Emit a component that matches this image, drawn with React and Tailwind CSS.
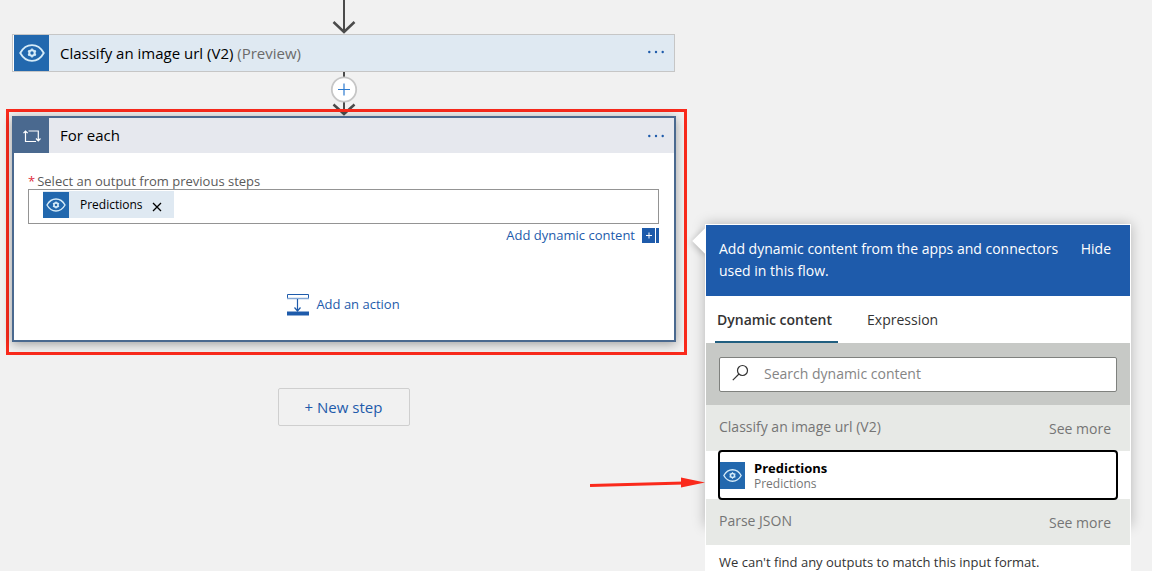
import React, { useState } from 'react';

const EyeIcon = ({ className }) => (
  <svg viewBox="0 0 26 26" className={className} fill="none" stroke="#d5ebf8" aria-hidden="true">
    <path d="M4 13C6.200 9 9.300 7 13 7s6.800 2 9 6c-2.200 4-5.300 6-9 6s-6.800-2-9-6z" strokeWidth="1.400" />
    <circle cx="13" cy="13" r="2.100" strokeWidth="1.600" />
    <path d="M13 9.500v1.200M13 15.300v1.200M10 11.300l1 .6M15 14.100l1 .6M10 14.700l1-.6M15 11.900l1-.6" strokeWidth="1.200" />
  </svg>
);

const LoopIcon = () => (
  <svg viewBox="0 0 18 14" className="w-[18px] h-[14px]" fill="none" stroke="#fff" strokeWidth="1.200" aria-hidden="true">
    <path d="M2.500 2v10.500H13M.5 4.200L2.500 2l2.200 2.200M5.500 2h9.800v10M13 9.500l2.300 2.300 2.200-2.300" />
  </svg>
);

const InsertIcon = () => (
  <svg viewBox="0 0 22 22" className="w-[22px] h-[22px]" fill="none" stroke="#1e5bab" aria-hidden="true">
    <path d="M.5 4.500v-4h21v4" />
    <path d="M0 4.500h22" stroke="#84a8d6" strokeWidth="1.500" />
    <path d="M10.500 5v12M7.500 13.500l3 3.500 3-3.500" strokeWidth="1.200" />
    <path d="M0 19.500h22" strokeWidth="4" />
  </svg>
);

const MoreButton = () => (
  <button type="button" aria-label="More options" className="p-1">
    <svg viewBox="0 0 16 4" className="w-4 h-1" fill="#1e5bab" aria-hidden="true">
      <circle cx="1.300" cy="2" r="1.200" />
      <circle cx="8" cy="2" r="1.200" />
      <circle cx="14.700" cy="2" r="1.200" />
    </svg>
  </button>
);

const SectionHeader = ({ title }) => (
  <div className="flex justify-between h-[46px] px-[13px] bg-[#e7e9e6] text-sm leading-5 text-[#757575]">
    <h3 className="pt-3">{title}</h3>
    <button type="button" className="self-end pb-3 mr-1.5">See more</button>
  </div>
);

const ForEachCard = () => (
  <section className="bg-white border-2 border-[#4a698f] shadow-[0_2px_10px_rgba(0,0,0,0.35)]">
    <header className="flex items-center h-[35px] bg-[#e6e8ee]">
      <span className="flex items-center justify-center w-[35px] h-full bg-[#4a698f]">
        <LoopIcon />
      </span>
      <h2 className="flex-1 pl-[11px] text-[15px]">For each</h2>
      <div className="flex pr-1.5"><MoreButton /></div>
    </header>
    <div className="pt-5 pl-[14px] pr-[15px] pb-6">
      <label htmlFor="output" className="flex gap-0.5 text-[13px] leading-4 text-[#5a5a5a]">
        <span className="text-[#e02b3c]">*</span>
        Select an output from previous steps
      </label>
      <div className="flex h-[35px] pl-[14px] pt-px border border-[#949494]">
        <span className="flex items-center h-[27px] bg-[#dfe9f2] text-xs">
          <EyeIcon className="w-[26px] h-[26px] bg-[#2268ae]" />
          <span className="pl-[11px]">Predictions</span>
          <button type="button" aria-label="Remove Predictions" className="pl-[9px] pr-3 pt-1">
            <svg viewBox="0 0 10 10" className="w-[10px] h-[10px]" stroke="#000" strokeWidth="1.300" aria-hidden="true">
              <path d="M1 1l8 8M9 1L1 9" />
            </svg>
          </button>
        </span>
        <input id="output" type="text" className="flex-1 min-w-0 outline-none" />
      </div>
      <div className="flex justify-end">
        <button type="button" className="flex items-center gap-[7px] pt-0.5 text-[13px] leading-[18px] text-[#1e5bab]">
          Add dynamic content
          <svg viewBox="0 0 17 15" className="w-[17px] h-[15px]" aria-hidden="true">
            <path d="M0 0h17v15H0z" fill="#1e5bab" />
            <path d="M13.500 0v15" stroke="#fff" />
            <path d="M4 7.500h6M7 4.500v6" stroke="#fff" />
          </svg>
        </button>
      </div>
      <div className="flex justify-center pt-[50px]">
        <button type="button" className="flex items-center gap-[7px] text-[13px] text-[#1e5bab]">
          <InsertIcon />
          Add an action
        </button>
      </div>
    </div>
  </section>
);

const Flow = () => (
  <main className="flex-1 min-w-0 flex flex-col">
    <svg viewBox="0 0 24 34" className="self-center w-6 h-[34px] ml-[-5px]" fill="none" stroke="#4b4b4b" aria-hidden="true">
      <path d="M12 0v32" strokeWidth="2" />
      <path d="M1.500 22L12 32 22.500 22" strokeWidth="2.500" />
    </svg>
    <section className="flex items-center h-[38px] ml-1.5 mr-3 bg-[#dfe9f2] border border-[#c6c6c6]">
      <span className="flex items-center justify-center w-9 h-full border-l border-white bg-[#2268ae]">
        <EyeIcon className="w-[34px] h-[34px]" />
      </span>
      <h2 className="flex-1 pl-[11px] text-[15px]">
        Classify an image url (V2) <span className="text-[#6b6b6b]">(Preview)</span>
      </h2>
      <div className="flex pr-1.5 pb-0.5"><MoreButton /></div>
    </section>
    <button type="button" aria-label="Insert a new step" className="self-center ml-[-5px] h-[37px]">
      <svg viewBox="0 0 26 37" className="w-[26px] h-[37px] overflow-visible" fill="none" stroke="#4b4b4b">
        <path d="M13 0v42" strokeWidth="2" />
        <path d="M2.500 32.500L13 42l10.500-9.500" strokeWidth="2.500" />
        <circle cx="13" cy="17.500" r="12.200" fill="#fff" stroke="#c6c6c6" strokeWidth="1.800" />
        <path d="M7 17.500h12M13 11.500v12" stroke="#2d7bd0" strokeWidth="1.200" />
      </svg>
    </button>
    <div className="relative border-[3px] border-[#fa2a1c] pt-1 pl-[3px] pr-2 pb-2.5">
      <ForEachCard />
    </div>
    <button type="button" className="self-center w-[132px] h-[38px] mt-[33px] ml-[-6px] border border-[#cfcfcf] rounded-xs text-[15px] text-[#1e5bab]">
      + New step
    </button>
  </main>
);

const DynamicContentPanel = () => {
  const [search, setSearch] = useState('');

  return (
    <aside className="relative w-[426px] mt-56">
      <div className="absolute inset-x-0 top-0 h-[302px] shadow-[0_0_12px_rgba(0,0,0,0.25)]" />
      <div className="absolute top-2 left-0 w-[18px] h-[18px] -translate-x-1/2 rotate-45 bg-white shadow-[0_2px_6px_rgba(0,0,0,0.2)]" />
      <div className="relative bg-white border border-white">
        <header className="flex justify-between h-[71px] px-[13px] pt-[13px] bg-[#1e5bab] text-white text-sm leading-[22px]">
          <p className="w-[345px]">Add dynamic content from the apps and connectors used in this flow.</p>
          <button type="button" className="self-start mr-1.5">Hide</button>
        </header>
        <div role="tablist" className="flex gap-[27px] h-[47px] px-[9px] text-sm text-[#333]">
          <button type="button" role="tab" aria-selected="true" className="pl-0.5 pr-1.5 pt-0.5 border-b-2 border-[#215f80] font-semibold">
            Dynamic content
          </button>
          <button type="button" role="tab" aria-selected="false" className="px-0.5">Expression</button>
        </div>
        <div className="h-[62px] px-[13px] pt-[14px] bg-[#c7c9c6]">
          <label className="flex items-center h-[35px] px-3 bg-white border border-[#7f817e] rounded-xs">
            <svg viewBox="0 0 18 18" className="w-[18px] h-[18px] mb-1" fill="none" stroke="#333" strokeWidth="1.200" aria-hidden="true">
              <circle cx="10.500" cy="6.500" r="5" />
              <path d="M7 10L.8 16.200" />
            </svg>
            <input
              type="text"
              aria-label="Search dynamic content"
              placeholder="Search dynamic content"
              value={search}
              onChange={e => setSearch(e.target.value)}
              className="flex-1 min-w-0 pl-[14px] pb-0.5 text-sm outline-none placeholder:text-[#858585]"
            />
          </label>
        </div>
        <SectionHeader title="Classify an image url (V2)" />
        <div className="relative px-3 -my-px">
          <button type="button" className="flex items-center w-full h-[50px] bg-white border-2 border-black rounded-sm text-left text-[13px] leading-4">
            <EyeIcon className="w-[25px] h-[27px] bg-[#2268ae]" />
            <span className="pl-[9px] pt-0.5">
              <span className="block font-bold">Predictions</span>
              <span className="block text-xs leading-4 text-[#757575]">Predictions</span>
            </span>
          </button>
        </div>
        <SectionHeader title="Parse JSON" />
        <p className="px-[13px] py-2 text-[13px] leading-[18px] text-[#333]">
          We can't find any outputs to match this input format.
        </p>
      </div>
      <svg viewBox="0 0 116 12" className="absolute right-full top-[252px] w-[116px] h-3" aria-hidden="true">
        <path d="M1 9.500L95 7" stroke="#fa2a1c" strokeWidth="3" />
        <path d="M92 1.500L116 6.500 92 11.500z" fill="#fa2a1c" />
      </svg>
    </aside>
  );
};

const App = () => (
  <div className="flex items-start gap-[18px] h-screen overflow-hidden pl-1.5 pr-[21px] bg-[#f1f1f1] text-black font-['Open_Sans','Noto_Sans',sans-serif]">
    <Flow />
    <DynamicContentPanel />
  </div>
);

export default App;
